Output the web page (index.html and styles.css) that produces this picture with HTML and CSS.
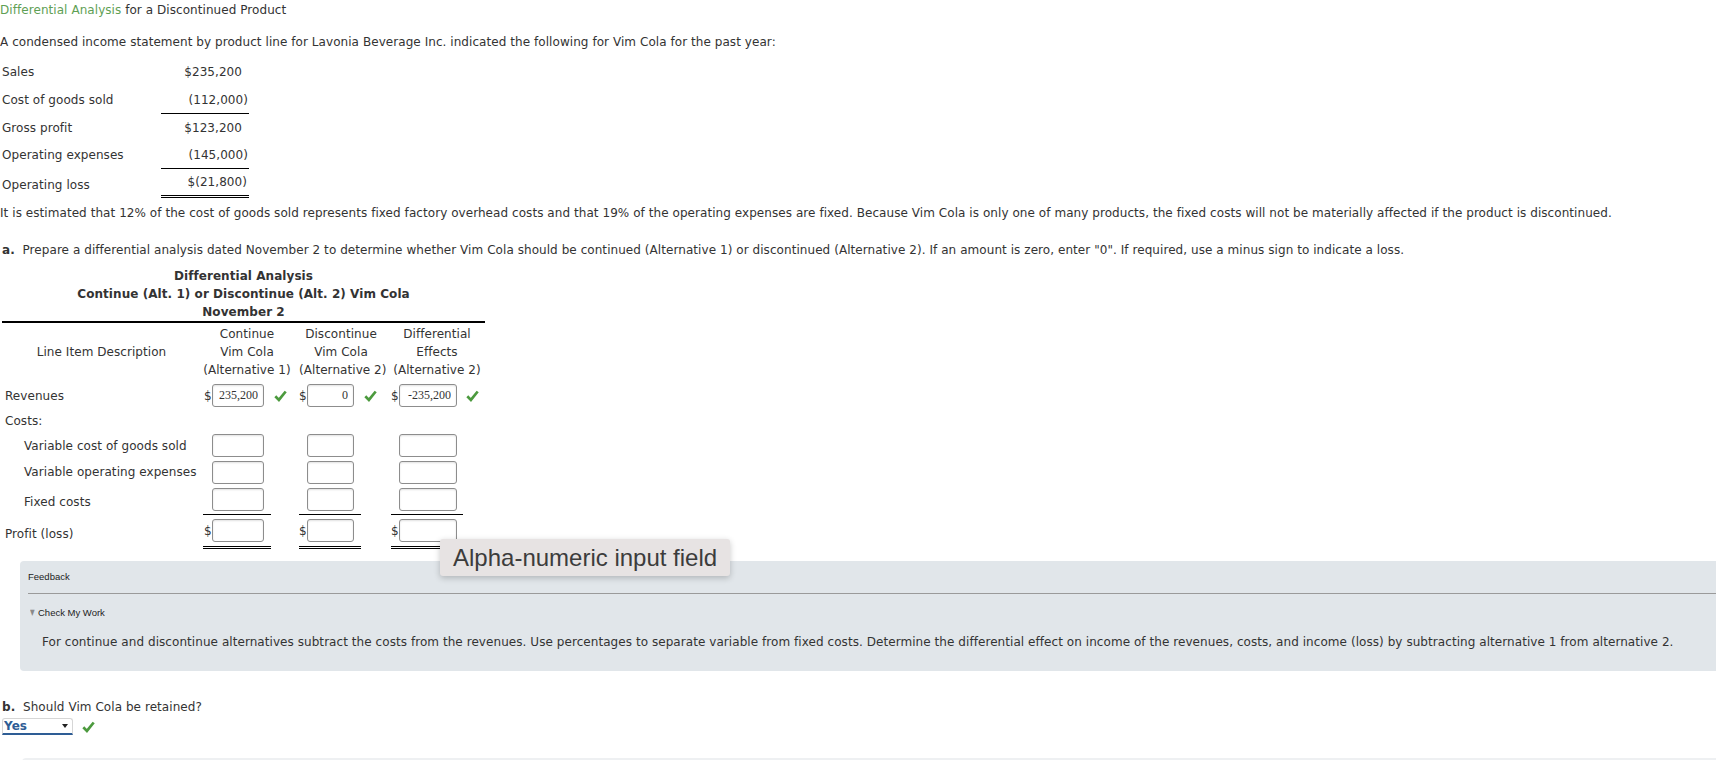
FILE: index.html
```html
<!DOCTYPE html>
<html>
<head>
<meta charset="utf-8">
<title>Differential Analysis for a Discontinued Product</title>
<link rel="stylesheet" href="styles.css">
</head>
<body>
<div class="page">
  <p class="title"><span class="accent">Differential Analysis</span> for a Discontinued Product</p>
  <p class="intro">A condensed income statement by product line for Lavonia Beverage Inc. indicated the following for Vim Cola for the past year:</p>

  <div class="income">
    <div class="irow"><span class="ilabel">Sales</span><span class="iamt pos">$235,200</span></div>
    <div class="irow"><span class="ilabel">Cost of goods sold</span><span class="iamt line">(112,000)</span></div>
    <div class="irow short"><span class="ilabel">Gross profit</span><span class="iamt pos">$123,200</span></div>
    <div class="irow"><span class="ilabel">Operating expenses</span><span class="iamt line">(145,000)</span></div>
    <div class="irow last"><span class="ilabel">Operating loss</span><span class="iamt dbl">$(21,800)</span></div>
  </div>

  <p class="para est">It is estimated that 12% of the cost of goods sold represents fixed factory overhead costs and that 19% of the operating expenses are fixed. Because Vim Cola is only one of many products, the fixed costs will not be materially affected if the product is discontinued.</p>
  <p class="para qa"><b class="qlabel">a.</b>&nbsp; Prepare a differential analysis dated November 2 to determine whether Vim Cola should be continued (Alternative 1) or discontinued (Alternative 2). If an amount is zero, enter "0". If required, use a minus sign to indicate a loss.</p>

  <div class="da">
    <div class="da-title">
      <div>Differential Analysis</div>
      <div>Continue (Alt. 1) or Discontinue (Alt. 2) Vim Cola</div>
      <div>November 2</div>
    </div>

    <div class="drow head">
      <div class="hcell hlabel">Line Item Description</div>
      <div class="hcell span1">Continue<br>Vim Cola<br>(Alternative 1)</div>
      <div class="hcell span2">Discontinue<br>Vim Cola<br>(Alternative 2)</div>
      <div class="hcell span3">Differential<br>Effects<br>(Alternative 2)</div>
    </div>

    <div class="drow r-rev">
      <div class="dlabel">Revenues</div>
      <div class="mcell c1"><span class="cur">$</span><input class="box w1" type="text" value="235,200" readonly></div>
      <div class="kcell"><svg class="check" viewBox="0 0 13 12" width="13" height="12"><path d="M1.3 6.3 L4.9 9.9 L11.7 1.5"/></svg></div>
      <div class="mcell c2"><span class="cur">$</span><input class="box w2" type="text" value="0" readonly></div>
      <div class="kcell"><svg class="check" viewBox="0 0 13 12" width="13" height="12"><path d="M1.3 6.3 L4.9 9.9 L11.7 1.5"/></svg></div>
      <div class="mcell c3"><span class="cur">$</span><input class="box w3" type="text" value="-235,200" readonly></div>
      <div class="kcell"><svg class="check" viewBox="0 0 13 12" width="13" height="12"><path d="M1.3 6.3 L4.9 9.9 L11.7 1.5"/></svg></div>
    </div>

    <div class="drow r-costs">
      <div class="dlabel">Costs:</div>
    </div>

    <div class="drow r-vcogs">
      <div class="dlabel indent">Variable cost of goods sold</div>
      <div class="mcell c1"><span class="cur"></span><input class="box w1" type="text" readonly></div>
      <div class="kcell"></div>
      <div class="mcell c2"><span class="cur"></span><input class="box w2" type="text" readonly></div>
      <div class="kcell"></div>
      <div class="mcell c3"><span class="cur"></span><input class="box w3" type="text" readonly></div>
      <div class="kcell"></div>
    </div>

    <div class="drow r-voe">
      <div class="dlabel indent">Variable operating expenses</div>
      <div class="mcell c1"><span class="cur"></span><input class="box w1" type="text" readonly></div>
      <div class="kcell"></div>
      <div class="mcell c2"><span class="cur"></span><input class="box w2" type="text" readonly></div>
      <div class="kcell"></div>
      <div class="mcell c3"><span class="cur"></span><input class="box w3" type="text" readonly></div>
      <div class="kcell"></div>
    </div>

    <div class="drow r-fixed">
      <div class="dlabel indent low">Fixed costs</div>
      <div class="mcell c1 under"><span class="cur"></span><input class="box w1" type="text" readonly></div>
      <div class="kcell"></div>
      <div class="mcell c2 under"><span class="cur"></span><input class="box w2" type="text" readonly></div>
      <div class="kcell"></div>
      <div class="mcell c3 under"><span class="cur"></span><input class="box w3" type="text" readonly></div>
      <div class="kcell"></div>
    </div>

    <div class="drow r-profit">
      <div class="dlabel low">Profit (loss)</div>
      <div class="mcell c1 dbl"><span class="cur">$</span><input class="box w1" type="text" readonly></div>
      <div class="kcell"></div>
      <div class="mcell c2 dbl"><span class="cur">$</span><input class="box w2" type="text" readonly></div>
      <div class="kcell"></div>
      <div class="mcell c3 dbl"><span class="cur">$</span><input class="box w3" type="text" readonly></div>
      <div class="kcell"></div>
    </div>
  </div>

  <div class="feedback">
    <div class="fb-head">Feedback</div>
    <div class="fb-check"><span class="tri">&#9660;</span>Check My Work</div>
    <p class="fb-text">For continue and discontinue alternatives subtract the costs from the revenues. Use percentages to separate variable from fixed costs. Determine the differential effect on income of the revenues, costs, and income (loss) by subtracting alternative 1 from alternative 2.</p>
  </div>

  <p class="para qb"><b class="qlabel">b.</b>&nbsp; Should Vim Cola be retained?</p>
  <div class="answer">
    <div class="select"><span class="sel-text">Yes</span><span class="sel-arrow"></span></div>
    <svg class="check" viewBox="0 0 13 12" width="13" height="12"><path d="M1.3 6.3 L4.9 9.9 L11.7 1.5"/></svg>
  </div>

  <div class="next-box"></div>

  <div class="tooltip">Alpha-numeric input field</div>
</div>
</body>
</html>
```

FILE: styles.css
```css
* { box-sizing: border-box; }

html, body {
  margin: 0;
  padding: 0;
}

body {
  width: 1716px;
  height: 760px;
  overflow: hidden;
  background: #ffffff;
  color: #333333;
  font-family: "DejaVu Sans", Verdana, sans-serif;
  font-size: 12px;
  letter-spacing: 0.06px;
}

.page {
  position: relative;
  width: 1716px;
  height: 760px;
  overflow: hidden;
}

p { margin: 0; }

.title {
  line-height: 18px;
  padding-top: 1px;
}

.accent { color: #5f9f55; }

.intro {
  line-height: 18px;
  margin-top: 14px;
}

/* condensed income statement */
.income {
  margin-top: 7px;
  width: 249px;
  display: flex;
  flex-direction: column;
}

.irow {
  display: grid;
  grid-template-columns: 161px 88px;
  height: 28px;
}

.irow.short { height: 27px; }
.irow.last { height: 29px; }

.ilabel {
  display: flex;
  align-items: center;
  padding-left: 2px;
}

.iamt {
  display: flex;
  align-items: center;
  justify-content: flex-end;
  padding-right: 1px;
}

.iamt.pos { padding-right: 7px; }
.iamt.line { border-bottom: 1px solid #000; }
.iamt.dbl { border-bottom: 3px double #000; padding-right: 2px; }
.irow.last .ilabel { padding-top: 2px; }

.para { line-height: 18px; }
.est { margin-top: 6px; }
.qa { margin-top: 19px; padding-left: 2px; }
.qlabel { font-weight: bold; color: #333; }

/* differential analysis table */
.da {
  margin-top: 8px;
  width: 485px;
}

.da-title {
  margin-left: 2px;
  border-bottom: 2px solid #000;
  text-align: center;
  font-weight: bold;
  line-height: 18px;
}

.drow {
  display: grid;
  grid-template-columns: 203px 68px 28px 62px 30px 72px 22px;
  align-items: stretch;
}

.head {
  padding: 2px 0;
  line-height: 18px;
}

.hcell {
  text-align: center;
  white-space: nowrap;
}

.hlabel {
  display: flex;
  align-items: center;
  justify-content: center;
}

.span1 { grid-column: 2 / 4; padding-right: 8px; }
.span2 { grid-column: 4 / 6; padding-right: 8px; }
.span3 { grid-column: 6 / 8; padding-right: 2px; }

.r-rev { height: 29px; }
.r-costs { height: 22px; }
.r-vcogs { height: 27px; }
.r-voe { height: 26px; }
.r-fixed { height: 30px; }
.r-profit { height: 34px; }

.dlabel {
  display: flex;
  align-items: center;
  padding-left: 5px;
}

.dlabel.indent { padding-left: 24px; }
.dlabel.low { padding-top: 3px; }

.mcell {
  display: flex;
  align-items: center;
}

.mcell.c1 { padding-left: 1px; }

.mcell.under { border-bottom: 1px solid #000; }
.mcell.dbl { border-bottom: 3px double #000; }

.cur {
  width: 8px;
  flex: none;
  font-size: 12px;
  color: #333;
}

.box {
  flex: none;
  height: 23px;
  margin: 0;
  border: 1px solid #8d8d8d;
  border-radius: 3px;
  background: #fff;
  box-shadow: inset 0 1px 2px rgba(0, 0, 0, 0.12);
  padding: 0 5px 0 2px;
  font-family: "Liberation Serif", "Times New Roman", serif;
  font-size: 12px;
  color: #333;
  text-align: right;
  outline: none;
}

.w1 { width: 52px; }
.w2 { width: 47px; }
.w3 { width: 58px; }

.kcell {
  display: flex;
  align-items: center;
  padding-left: 3px;
}

.check {
  flex: none;
  display: block;
}

.check path {
  fill: none;
  stroke: #4c9a3e;
  stroke-width: 2.7;
  stroke-linecap: butt;
  stroke-linejoin: miter;
}

/* feedback panel */
.feedback {
  margin-top: 12px;
  margin-left: 20px;
  margin-right: -20px;
  height: 110px;
  background: #e1e6ea;
  border-radius: 4px 0 0 4px;
}

.fb-head {
  margin-left: 8px;
  height: 33px;
  padding-top: 10px;
  border-bottom: 1px solid #9a9a9a;
  font-family: "Liberation Sans", Arial, sans-serif;
  font-size: 9.5px;
  line-height: 12px;
  color: #222;
  letter-spacing: 0;
}

.fb-check {
  margin-left: 8px;
  margin-top: 13px;
  display: flex;
  align-items: center;
  font-family: "Liberation Sans", Arial, sans-serif;
  font-size: 9.5px;
  line-height: 12px;
  color: #222;
  letter-spacing: 0;
}

.tri {
  font-family: "DejaVu Sans", sans-serif;
  font-size: 8px;
  color: #8a8a8a;
  width: 10px;
  padding-left: 1px;
  transform: scaleX(0.75);
}

.fb-text {
  margin-top: 14px;
  padding-left: 22px;
  line-height: 18px;
  color: #333;
}

/* part b */
.qb {
  margin-top: 27px;
  padding-left: 2px;
}

.answer {
  margin-top: 2px;
  margin-left: 2px;
  display: flex;
  align-items: center;
  gap: 9px;
}

.select {
  position: relative;
  width: 71px;
  height: 17px;
  border: 1px solid #d6d6d6;
  border-bottom: 2px solid #2e5d95;
  border-radius: 3px 3px 0 0;
  background: #fff;
  display: flex;
  align-items: center;
  padding-left: 1px;
}

.sel-text {
  color: #2e5d95;
  font-weight: bold;
  font-size: 12px;
  line-height: 14px;
}

.sel-arrow {
  position: absolute;
  right: 4px;
  top: 5px;
  width: 0;
  height: 0;
  border-left: 3px solid transparent;
  border-right: 3px solid transparent;
  border-top: 4px solid #222;
}

.next-box {
  margin-top: 23px;
  margin-left: 22px;
  margin-right: -20px;
  height: 40px;
  background: #eef0f2;
  border-radius: 4px 0 0 0;
}

/* hover tooltip */
.tooltip {
  position: absolute;
  left: 440px;
  top: 539px;
  width: 290px;
  height: 37px;
  padding-left: 13px;
  display: flex;
  align-items: center;
  background: #e7e3e3;
  border-radius: 3px;
  box-shadow: 0 2px 6px rgba(0, 0, 0, 0.22);
  font-family: "Liberation Sans", Arial, sans-serif;
  font-size: 24px;
  letter-spacing: 0;
  color: #3c3c3c;
}
```
